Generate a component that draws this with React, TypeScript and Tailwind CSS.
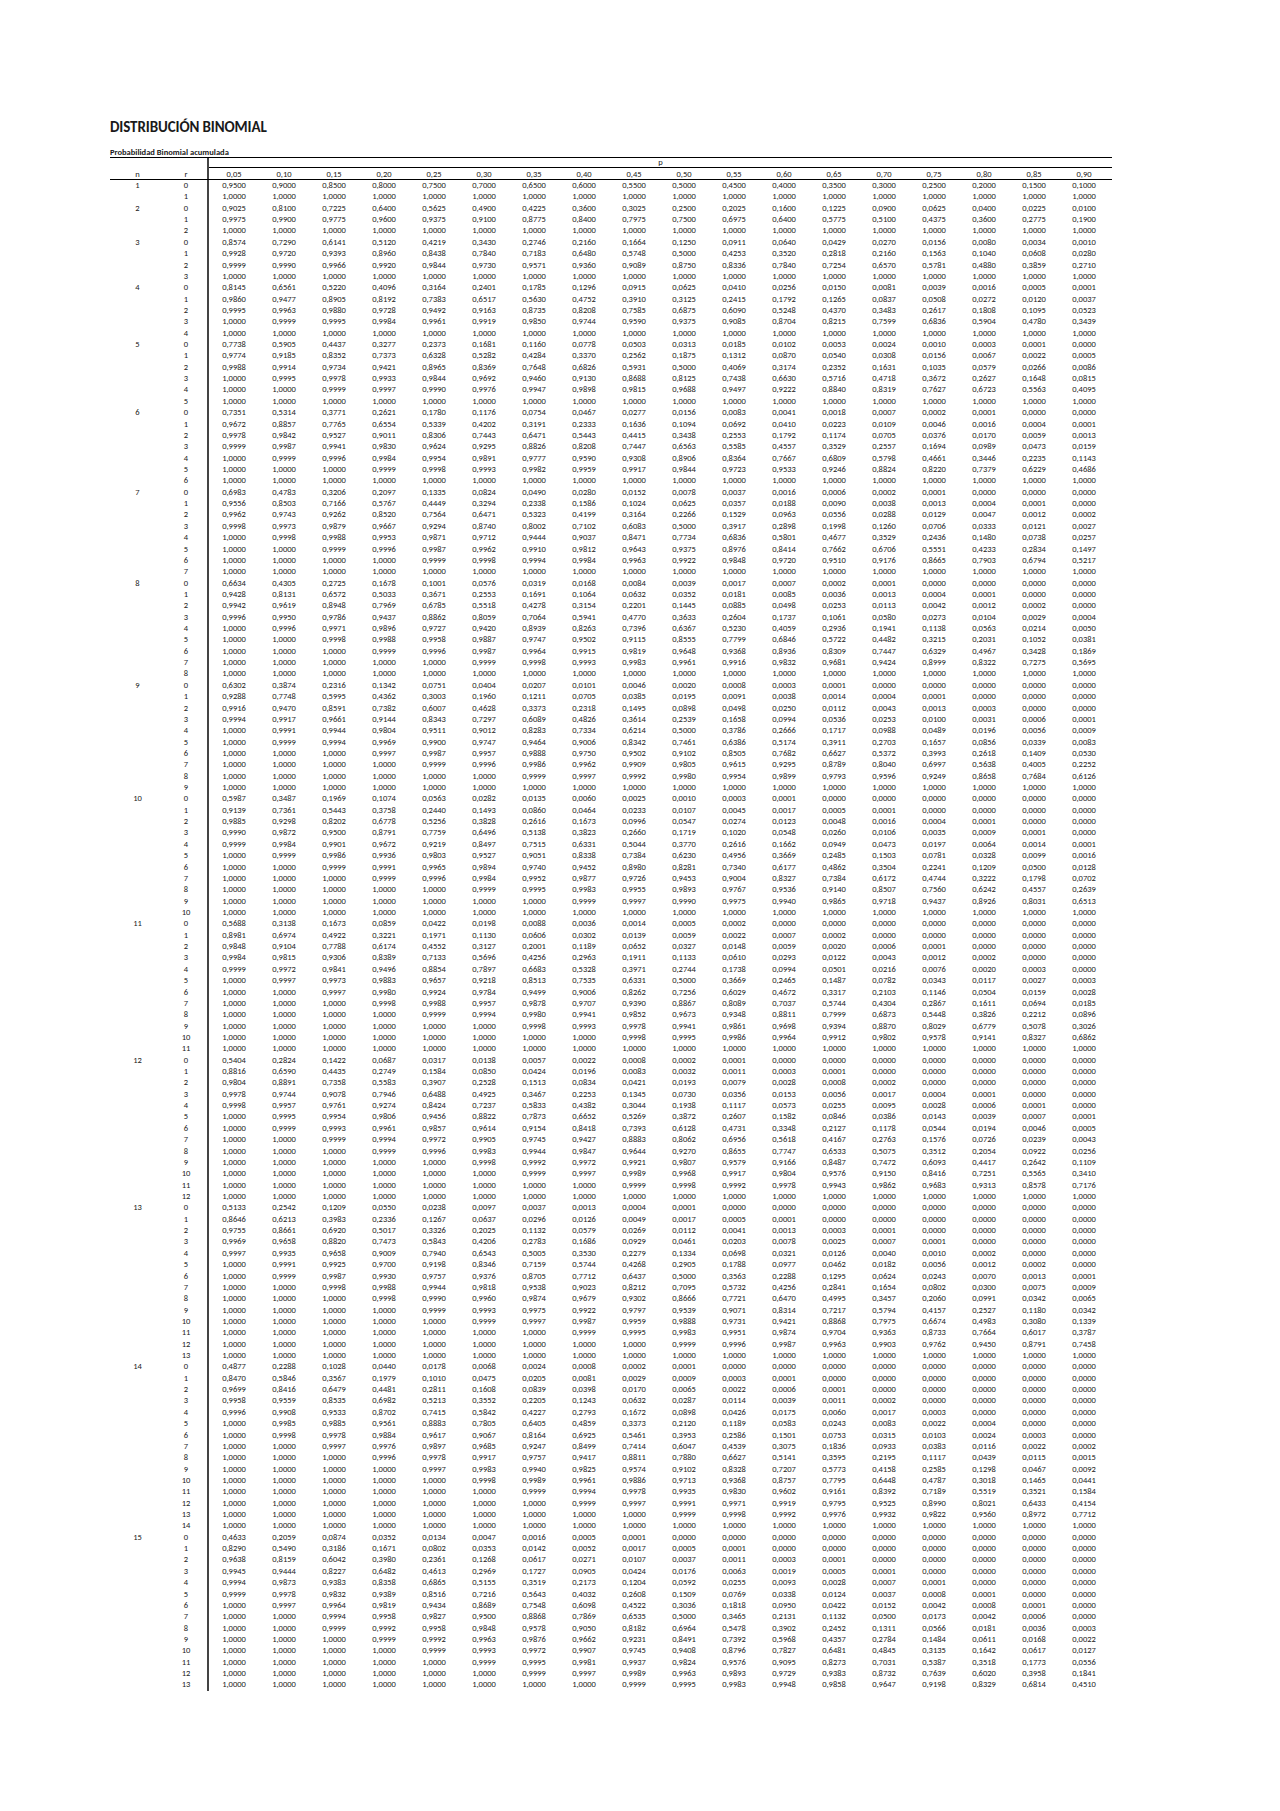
const probs = [0.05, 0.1, 0.15, 0.2, 0.25, 0.3, 0.35, 0.4, 0.45, 0.5, 0.55, 0.6, 0.65, 0.7, 0.75, 0.8, 0.85, 0.9];

function choose(n: number, k: number) {
  let c = 1;
  for (let i = 1; i <= k; i++) c = (c * (n - k + i)) / i;
  return c;
}

function cumulative(n: number, r: number, p: number) {
  let s = 0;
  for (let k = 0; k <= r; k++) s += choose(n, k) * Math.pow(p, k) * Math.pow(1 - p, n - k);
  return s;
}

function fmt(v: number, digits: number) {
  const f = Math.pow(10, digits);
  return (Math.round(v * f + 1e-9) / f).toFixed(digits).replace('.', ',');
}

type Row = { n: number; r: number };

const rows: Row[] = [];
for (let n = 1; n <= 15; n++) {
  const last = n === 15 ? 13 : n;
  for (let r = 0; r <= last; r++) rows.push({ n, r });
}

const font = { fontFamily: 'Carlito, Calibri, Lato, "Liberation Sans", sans-serif' };

export default function App() {
  return (
    <div
      className="h-[1811px] w-[1280px] bg-white pl-[110px] pt-[119px] text-[#1a1a1a]"
      style={font}
    >
      <h1 className="text-[15px] font-bold leading-[16px] tracking-[-0.1px]">DISTRIBUCIÓN BINOMIAL</h1>
      <p className="mt-[12px] text-[8.5px] font-bold leading-[10px]">Probabilidad Binomial acumulada</p>

      <div className="w-[1002px] border-t border-black text-[8.5px]">
        {/* p header */}
        <div className="flex h-[10px]">
          <div className="w-[99px] border-r-2 border-[#444]" />
          <div className="flex flex-1 items-center justify-center border-b border-black leading-[9px]">p</div>
        </div>
        <div className="flex h-[12px] items-center border-b border-black leading-[12px]">
          <div className="w-[55px] text-center">n</div>
          <div className="h-full w-[44px] border-r-2 border-[#444] text-center">r</div>
          {probs.map((p) => (
            <div key={p} className="w-[50px] text-center">
              {fmt(p, 2)}
            </div>
          ))}
        </div>
        {rows.map((row) => (
          <div key={`${row.n}-${row.r}`} className="flex h-[11.37px] leading-[11.37px]">
            <div className="w-[55px] text-center">{row.r === 0 ? row.n : ''}</div>
            <div className="w-[44px] border-r-2 border-[#444] text-center">{row.r}</div>
            {probs.map((p) => (
              <div key={p} className="w-[50px] text-center">
                {fmt(cumulative(row.n, row.r, p), 4)}
              </div>
            ))}
          </div>
        ))}
      </div>
    </div>
  );
}
